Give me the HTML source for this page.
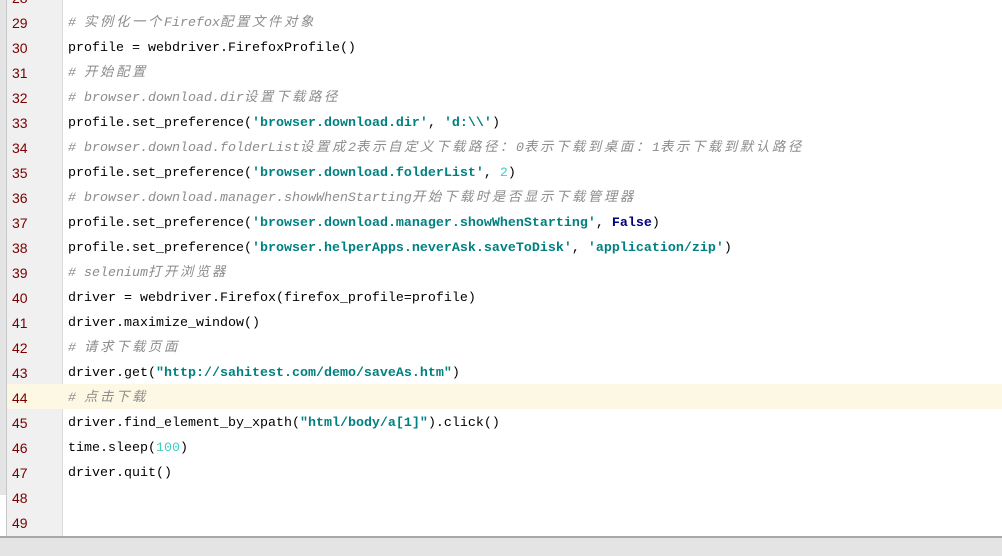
<!DOCTYPE html>
<html><head><meta charset="utf-8"><style>
html,body{margin:0;padding:0}
body{width:1002px;height:554px;position:relative;overflow:hidden;background:#fff;font-family:"Liberation Mono","Noto Sans CJK SC",monospace;font-size:13.33px;color:#000}
#strip{position:absolute;left:0;top:0;width:6px;height:495px;background:#e4e4e4;border-right:1px solid #c8c8c8}
#strip2{position:absolute;left:0;top:495px;width:6px;height:41px;background:#fff;border-right:1px solid #c8c8c8}
#gut{position:absolute;left:7px;top:0;width:55px;height:536px;background:#f0f0f0;border-right:1px solid #dcdcdc}
.hl{position:absolute;left:7px;top:384px;width:995px;height:25px;background:#fdf8e4}
.ln{position:absolute;left:12px;height:25px;line-height:25px;font-family:"Liberation Sans",sans-serif;font-size:14px;color:#7a0000}
.cd{position:absolute;left:68px;height:25px;line-height:25px;white-space:pre}
.cm{color:#8c8c8c;font-style:italic}
.s{color:#008080;font-weight:bold}
.k{color:#000080;font-weight:bold}
.n{color:#3fd0c0}
.c{font-family:"Noto Sans CJK SC",sans-serif;font-size:13.33px;letter-spacing:2.67px;line-height:10px}
#bot{position:absolute;left:0;top:536px;width:1002px;height:18px;background:#e4e4e4;border-top:2px solid #a8a8a8}
</style></head><body>
<div id="gut"></div><div id="strip"></div><div id="strip2"></div>
<div class="hl"></div>
<div class="ln" style="top:-14.5px">28</div>
<div class="ln" style="top:10.5px">29</div><div class="cd cm" style="top:10.5px"># <span class="c">实例化一个</span>Firefox<span class="c">配置文件对象</span></div>
<div class="ln" style="top:35.5px">30</div><div class="cd" style="top:35.5px">profile = webdriver.FirefoxProfile()</div>
<div class="ln" style="top:60.5px">31</div><div class="cd cm" style="top:60.5px"># <span class="c">开始配置</span></div>
<div class="ln" style="top:85.5px">32</div><div class="cd cm" style="top:85.5px"># browser.download.dir<span class="c">设置下载路径</span></div>
<div class="ln" style="top:110.5px">33</div><div class="cd" style="top:110.5px">profile.set_preference(<span class="s">'browser.download.dir'</span>, <span class="s">'d:\\'</span>)</div>
<div class="ln" style="top:135.5px">34</div><div class="cd cm" style="top:135.5px"># browser.download.folderList<span class="c">设置成</span>2<span class="c">表示自定义下载路径：</span>0<span class="c">表示下载到桌面：</span>1<span class="c">表示下载到默认路径</span></div>
<div class="ln" style="top:160.5px">35</div><div class="cd" style="top:160.5px">profile.set_preference(<span class="s">'browser.download.folderList'</span>, <span class="n">2</span>)</div>
<div class="ln" style="top:185.5px">36</div><div class="cd cm" style="top:185.5px"># browser.download.manager.showWhenStarting<span class="c">开始下载时是否显示下载管理器</span></div>
<div class="ln" style="top:210.5px">37</div><div class="cd" style="top:210.5px">profile.set_preference(<span class="s">'browser.download.manager.showWhenStarting'</span>, <span class="k">False</span>)</div>
<div class="ln" style="top:235.5px">38</div><div class="cd" style="top:235.5px">profile.set_preference(<span class="s">'browser.helperApps.neverAsk.saveToDisk'</span>, <span class="s">'application/zip'</span>)</div>
<div class="ln" style="top:260.5px">39</div><div class="cd cm" style="top:260.5px"># selenium<span class="c">打开浏览器</span></div>
<div class="ln" style="top:285.5px">40</div><div class="cd" style="top:285.5px">driver = webdriver.Firefox(firefox_profile=profile)</div>
<div class="ln" style="top:310.5px">41</div><div class="cd" style="top:310.5px">driver.maximize_window()</div>
<div class="ln" style="top:335.5px">42</div><div class="cd cm" style="top:335.5px"># <span class="c">请求下载页面</span></div>
<div class="ln" style="top:360.5px">43</div><div class="cd" style="top:360.5px">driver.get(<span class="s">"http://sahitest.com/demo/saveAs.htm"</span>)</div>
<div class="ln" style="top:385.5px">44</div><div class="cd cm" style="top:385.5px"># <span class="c">点击下载</span></div>
<div class="ln" style="top:410.5px">45</div><div class="cd" style="top:410.5px">driver.find_element_by_xpath(<span class="s">"html/body/a[1]"</span>).click()</div>
<div class="ln" style="top:435.5px">46</div><div class="cd" style="top:435.5px">time.sleep(<span class="n">100</span>)</div>
<div class="ln" style="top:460.5px">47</div><div class="cd" style="top:460.5px">driver.quit()</div>
<div class="ln" style="top:485.5px">48</div>
<div class="ln" style="top:510.5px">49</div>
<div id="bot"></div>
</body></html>
